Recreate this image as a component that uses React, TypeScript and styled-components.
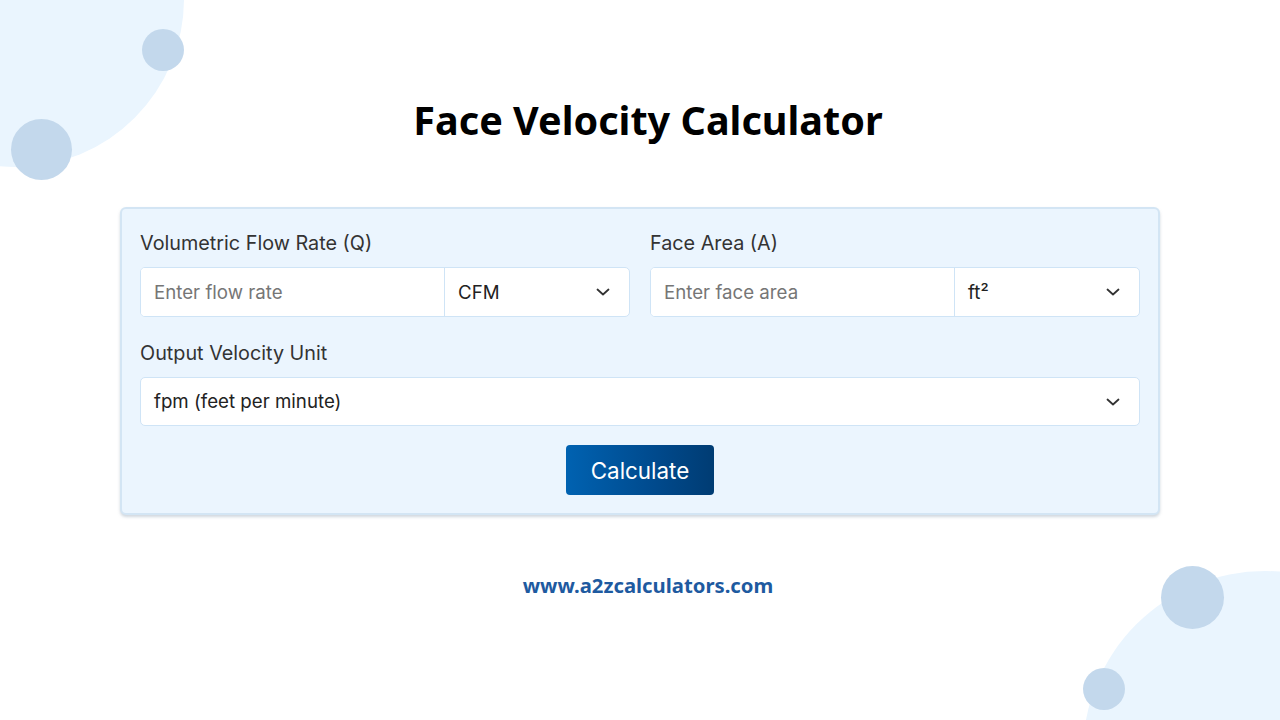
import * as React from 'react';
import styled, {createGlobalStyle} from 'styled-components';

const GlobalStyle = createGlobalStyle`
  html, body {
    margin: 0;
    padding: 0;
    background: #ffffff;
  }
  * {
    box-sizing: border-box;
  }
`;

const Chevron = () => (
  <svg width='14' height='8' viewBox='0 0 14 8' fill='none'>
    <path d='M1.5 1.5L7 6.5L12.5 1.5' stroke='#333' strokeWidth='1.8'
      strokeLinecap='round' strokeLinejoin='round'/>
  </svg>
);

const App = () => {
  return (
    <Page>
      <GlobalStyle/>
      <Blob corner='top'/>
      <Dot size={42} x={142} y={29}/>
      <Dot size={61} x={11} y={119}/>
      <Blob corner='bottom'/>
      <Dot size={63} x={1161} y={566}/>
      <Dot size={42} x={1083} y={668}/>

      <Title>Face Velocity Calculator</Title>

      <Card>
        <Row>
          <Field>
            <Label>Volumetric Flow Rate (Q)</Label>
            <InputGroup>
              <TextInput placeholder='Enter flow rate'/>
              <UnitSelect>
                <span>CFM</span>
                <Chevron/>
              </UnitSelect>
            </InputGroup>
          </Field>
          <Field>
            <Label>Face Area (A)</Label>
            <InputGroup>
              <TextInput placeholder='Enter face area'/>
              <UnitSelect>
                <span>ft²</span>
                <Chevron/>
              </UnitSelect>
            </InputGroup>
          </Field>
        </Row>
        <Field>
          <Label>Output Velocity Unit</Label>
          <WideSelect>
            <span>fpm (feet per minute)</span>
            <Chevron/>
          </WideSelect>
        </Field>
        <ButtonRow>
          <CalcButton>Calculate</CalcButton>
        </ButtonRow>
      </Card>

      <Footer>www.a2zcalculators.com</Footer>
    </Page>
  );
};

const Page = styled.div`
  position: relative;
  width: 1280px;
  height: 720px;
  overflow: hidden;
  background: #ffffff;
  display: flex;
  flex-direction: column;
  align-items: center;
  padding-top: 96px;
`;

const Blob = styled.div<{corner: 'top' | 'bottom'}>`
  position: absolute;
  border-radius: 50%;
  background: #eaf5fe;
  ${(props) => props.corner === 'top' ?
    'width: 336px; height: 336px; left: -152px; top: -169px;' :
    'width: 364px; height: 364px; left: 1083px; top: 571px;'}
`;

const Dot = styled.div<{size: number; x: number; y: number}>`
  position: absolute;
  left: ${(props) => props.x}px;
  top: ${(props) => props.y}px;
  width: ${(props) => props.size}px;
  height: ${(props) => props.size}px;
  border-radius: 50%;
  background: #c3d8ec;
`;

const Title = styled.h1`
  position: relative;
  margin: 0 0 0 16px;
  font-family: 'Noto Sans', sans-serif;
  font-weight: 700;
  font-size: 39.6px;
  line-height: 48px;
  color: #000000;
`;

const Card = styled.div`
  position: relative;
  margin-top: 63px;
  width: 1040px;
  padding: 22px 18px 18px;
  background: #ebf5fe;
  border: 2px solid #d3e5f4;
  border-radius: 6px;
  box-shadow: 0 2px 3px rgba(120, 140, 160, 0.35);
  display: flex;
  flex-direction: column;
  font-family: 'Inter', sans-serif;
`;

const Row = styled.div`
  display: grid;
  grid-template-columns: 1fr 1fr;
  gap: 20px;
  margin-bottom: 24px;
`;

const Field = styled.div`
  display: flex;
  flex-direction: column;
`;

const Label = styled.label`
  font-size: 19.8px;
  line-height: 24px;
  color: #333333;
  margin-bottom: 12px;
`;

const InputGroup = styled.div`
  display: flex;
  height: 50px;
  background: #ffffff;
  border: 1px solid #cfe4f6;
  border-radius: 5px;
  overflow: hidden;
`;

const TextInput = styled.input`
  width: 304px;
  border: 0;
  border-right: 1px solid #cfe4f6;
  outline: 0;
  padding: 0 13px;
  font-family: 'Inter', sans-serif;
  font-size: 18.7px;
  color: #333;
  background: #ffffff;
  &::placeholder {
    color: #767676;
  }
`;

const UnitSelect = styled.div`
  flex: 1;
  display: flex;
  align-items: center;
  justify-content: space-between;
  padding: 0 19px 0 13px;
  font-size: 18.7px;
  color: #222222;
`;

const WideSelect = styled(UnitSelect)`
  flex: none;
  height: 49px;
  background: #ffffff;
  border: 1px solid #cfe4f6;
  border-radius: 5px;
`;

const ButtonRow = styled.div`
  display: flex;
  justify-content: center;
  margin-top: 19px;
`;

const CalcButton = styled.button`
  width: 148px;
  height: 50px;
  border: 0;
  border-radius: 4px;
  background: linear-gradient(90deg, #0062b1 0%, #004a8d 60%, #003c73 100%);
  color: #ffffff;
  font-family: 'Inter', sans-serif;
  font-size: 22.4px;
  cursor: pointer;
`;

const Footer = styled.div`
  position: relative;
  margin: 56px 0 0 16px;
  font-family: 'Noto Sans', sans-serif;
  font-weight: 700;
  font-size: 20.3px;
  color: #1e5aa0;
`;

export default App;
